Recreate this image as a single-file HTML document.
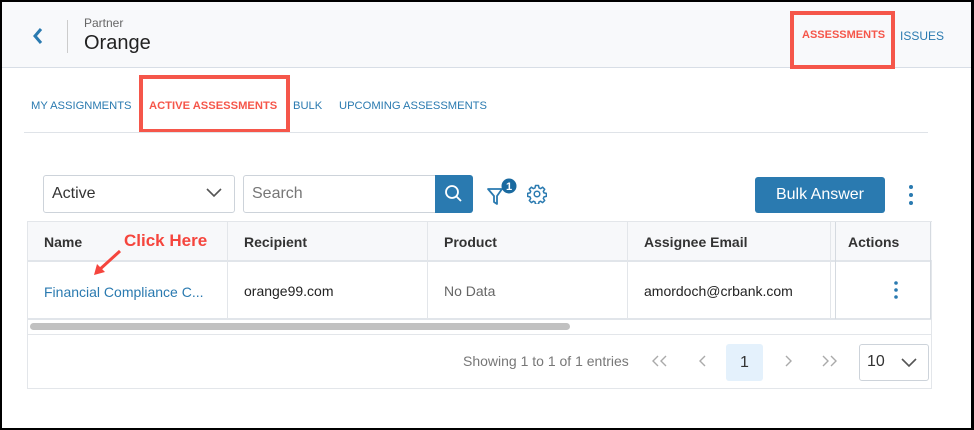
<!DOCTYPE html>
<html><head><style>
*{box-sizing:border-box;margin:0;padding:0}
body{width:974px;height:430px;background:#000;font-family:"Liberation Sans",sans-serif;position:relative;overflow:hidden}
.page{position:absolute;left:2px;top:2px;width:969px;height:426px;background:#fff}
.hdr{position:absolute;left:0;top:0;width:969px;height:66px;background:#f8f9fb;border-bottom:1px solid #d8dee6}
.a{position:absolute;white-space:nowrap}
.tab{font-size:11.2px;color:#2a7ab0}
.red{border:4px solid #f5564a;position:absolute}
.cell{position:absolute;font-size:14px;color:#222}
.th{font-weight:bold;color:#333;font-size:14px}
.pg{position:absolute;font-size:20px;color:#aaa;line-height:20px}
</style></head><body>
<div class="page">
<div class="hdr"></div>
<svg class="a" style="left:30px;top:25px" width="12" height="18"><path d="M9 2 L3 9 L9 16" stroke="#2a7ab0" stroke-width="3" fill="none"/></svg>
<div class="a" style="left:65px;top:18px;width:1px;height:33px;background:#ccc"></div>
<div class="a" style="left:82px;top:14px;font-size:12px;color:#666">Partner</div>
<div class="a" style="left:82px;top:30px;font-size:20px;color:#222">Orange</div>
<div class="a" style="left:800px;top:27px;font-size:11px;font-weight:bold;color:#f5564a">ASSESSMENTS</div>
<div class="a tab" style="left:898px;top:27px;font-size:12px">ISSUES</div>
<div class="red" style="left:788px;top:9px;width:105px;height:58px"></div>

<div class="a tab" style="left:29px;top:98px">MY ASSIGNMENTS</div>
<div class="a" style="left:147px;top:98px;font-size:11.2px;font-weight:bold;color:#f5564a">ACTIVE ASSESSMENTS</div>
<div class="a tab" style="left:291px;top:98px">BULK</div>
<div class="a tab" style="left:337px;top:98px">UPCOMING ASSESSMENTS</div>
<div class="red" style="left:137px;top:73px;width:151px;height:58px"></div>
<div class="a" style="left:22px;top:130px;width:904px;height:1px;background:#dfe3e8"></div>

<div class="a" style="left:41px;top:173px;width:192px;height:38px;border:1px solid #cdd3da;border-radius:3px"></div>
<div class="a" style="left:50px;top:183px;font-size:16px;color:#333">Active</div>
<svg class="a" style="left:204px;top:186px" width="16" height="10"><path d="M1 1 L8 8 L15 1" stroke="#555" stroke-width="1.6" fill="none"/></svg>
<div class="a" style="left:241px;top:173px;width:194px;height:38px;border:1px solid #cdd3da;border-radius:3px 0 0 3px"></div>
<div class="a" style="left:250px;top:183px;font-size:16px;color:#777">Search</div>
<div class="a" style="left:433px;top:173px;width:38px;height:38px;background:#2a7ab0;border-radius:0 3px 3px 0"></div>
<svg class="a" style="left:442px;top:182px" width="20" height="20"><circle cx="8" cy="8" r="6" stroke="#fff" stroke-width="1.8" fill="none"/><path d="M12.5 12.5 L17 17" stroke="#fff" stroke-width="1.8"/></svg>
<svg class="a" style="left:484px;top:176px" width="36" height="32"><path d="M2 11 H16 L11 18 V26 L8 24 V18 Z" stroke="#2a7ab0" stroke-width="1.8" fill="none" stroke-linejoin="round"/><circle cx="23" cy="8" r="7.5" fill="#1a6aa0"/><text x="23" y="12" font-size="11" font-weight="bold" fill="#fff" text-anchor="middle" font-family="Liberation Sans">1</text></svg>
<svg class="a" style="left:525px;top:182px" width="20" height="20" viewBox="0 0 20 20"><path d="M8.5 1.5h3l.5 2.4 1.6.7 2-1.4 2.1 2.1-1.4 2 .7 1.6 2.4.5v3l-2.4.5-.7 1.6 1.4 2-2.1 2.1-2-1.4-1.6.7-.5 2.4h-3l-.5-2.4-1.6-.7-2 1.4-2.1-2.1 1.4-2-.7-1.6-2.4-.5v-3l2.4-.5.7-1.6-1.4-2 2.1-2.1 2 1.4 1.6-.7z" stroke="#2a7ab0" stroke-width="1.5" fill="none" stroke-linejoin="round"/><circle cx="10" cy="10" r="2.8" stroke="#2a7ab0" stroke-width="1.5" fill="none"/></svg>
<div class="a" style="left:753px;top:175px;width:130px;height:36px;background:#2a7ab0;border-radius:3px;color:#fff;font-size:16px;text-align:center;line-height:36px">Bulk Answer</div>
<svg class="a" style="left:905px;top:182px" width="8" height="24"><circle cx="4" cy="3" r="2" fill="#2a7ab0"/><circle cx="4" cy="11" r="2" fill="#2a7ab0"/><circle cx="4" cy="19" r="2" fill="#2a7ab0"/></svg>

<div class="a" style="left:25px;top:219px;width:905px;height:168px;border:1px solid #e3e6ea"></div>
<div class="a" style="left:26px;top:220px;width:904px;height:40px;background:#f7f8fa;border-bottom:2px solid #e1e5ea"></div>
<div class="a" style="left:26px;top:316px;width:904px;height:2px;background:#e1e5ea"></div>
<div class="a" style="left:225px;top:220px;width:1px;height:97px;background:#e3e6ea"></div>
<div class="a" style="left:425px;top:220px;width:1px;height:97px;background:#e3e6ea"></div>
<div class="a" style="left:625px;top:220px;width:1px;height:97px;background:#e3e6ea"></div>
<div class="a" style="left:828px;top:220px;width:1px;height:97px;background:#e3e6ea"></div>
<div class="a" style="left:833px;top:220px;width:1px;height:97px;background:#d5dae0"></div>
<div class="a" style="left:928px;top:220px;width:1px;height:97px;background:#d5dae0"></div>
<div class="cell th" style="left:42px;top:232px">Name</div>
<div class="a" style="left:122px;top:229px;font-size:17px;font-weight:bold;color:#f5453d">Click Here</div>
<svg class="a" style="left:88px;top:245px" width="34" height="32"><path d="M30 4 L8 24" stroke="#f5453d" stroke-width="3"/><path d="M4 28 L7 17 L15 25 Z" fill="#f5453d"/></svg>
<div class="cell th" style="left:242px;top:232px">Recipient</div>
<div class="cell th" style="left:442px;top:232px">Product</div>
<div class="cell th" style="left:642px;top:232px">Assignee Email</div>
<div class="cell th" style="left:846px;top:232px">Actions</div>
<div class="cell" style="left:42px;top:282px;color:#2a7ab0">Financial Compliance C...</div>
<div class="cell" style="left:242px;top:281px">orange99.com</div>
<div class="cell" style="left:442px;top:281px;color:#666">No Data</div>
<div class="cell" style="left:642px;top:281px">amordoch@crbank.com</div>
<svg class="a" style="left:890px;top:278px" width="8" height="22"><circle cx="4" cy="3" r="1.8" fill="#2a7ab0"/><circle cx="4" cy="10" r="1.8" fill="#2a7ab0"/><circle cx="4" cy="17" r="1.8" fill="#2a7ab0"/></svg>
<div class="a" style="left:28px;top:321px;width:540px;height:7px;background:#c1c1c1;border-radius:4px"></div>
<div class="a" style="left:26px;top:332px;width:904px;height:1px;background:#e3e6ea"></div>

<div class="a" style="left:461px;top:351px;font-size:14px;color:#777">Showing 1 to 1 of 1 entries</div>
<svg class="a" style="left:650px;top:353px" width="16" height="12"><path d="M6 1 L1 6 L6 11 M14 1 L9 6 L14 11" stroke="#aaa" stroke-width="1.4" fill="none"/></svg>
<svg class="a" style="left:697px;top:353px" width="8" height="12"><path d="M6 1 L1 6 L6 11" stroke="#aaa" stroke-width="1.4" fill="none"/></svg>
<div class="a" style="left:724px;top:342px;width:37px;height:37px;background:#e4f1fc;border-radius:3px;text-align:center;line-height:37px;font-size:16px;color:#333">1</div>
<svg class="a" style="left:782px;top:353px" width="8" height="12"><path d="M2 1 L7 6 L2 11" stroke="#aaa" stroke-width="1.4" fill="none"/></svg>
<svg class="a" style="left:819px;top:353px" width="16" height="12"><path d="M2 1 L7 6 L2 11 M10 1 L15 6 L10 11" stroke="#aaa" stroke-width="1.4" fill="none"/></svg>
<div class="a" style="left:857px;top:342px;width:70px;height:37px;border:1px solid #cdd3da;border-radius:3px"></div>
<div class="a" style="left:865px;top:351px;font-size:16px;color:#333">10</div>
<svg class="a" style="left:899px;top:356px" width="16" height="10"><path d="M1 1 L8 8 L15 1" stroke="#555" stroke-width="1.6" fill="none"/></svg>
</div>
</body></html>
